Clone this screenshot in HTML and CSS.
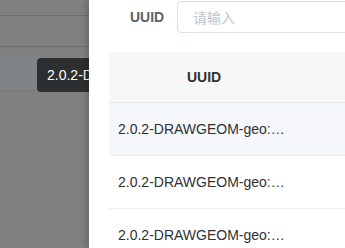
FILE: index.html
```html
<!DOCTYPE html>
<html lang="zh">
<head>
<meta charset="utf-8">
<link rel="stylesheet" href="styles.css">
</head>
<body>
<div class="page">
  <div class="backdrop">
    <div class="bg-row r1"></div>
    <div class="bg-row r2"></div>
    <div class="bg-row r3"></div>
    <div class="bg-row hl"></div>
    <div class="tooltip">2.0.2-DRAWGEOM</div>
  </div>
  <div class="drawer">
    <div class="form-row">
      <label class="form-label">UUID</label>
      <div class="input"><span class="placeholder">请输入</span></div>
    </div>
    <div class="table">
      <div class="thead"><div class="th">UUID</div></div>
      <div class="tr striped"><div class="td">2.0.2-DRAWGEOM-geo:…</div></div>
      <div class="tr"><div class="td">2.0.2-DRAWGEOM-geo:…</div></div>
      <div class="tr"><div class="td">2.0.2-DRAWGEOM-geo:…</div></div>
    </div>
  </div>
</div>
</body>
</html>
```
FILE: styles.css
```css
html, body {
  margin: 0;
  padding: 0;
  width: 345px;
  height: 248px;
  overflow: hidden;
  font-family: "Liberation Sans", Arial, sans-serif;
}
.page {
  display: flex;
  width: 345px;
  height: 248px;
  position: relative;
}
.backdrop {
  width: 89px;
  flex: none;
  background: #808080;
  position: relative;
  display: flex;
  flex-direction: column;
  overflow: hidden;
}
.bg-row { border-bottom: 1px solid #6f6f6f; }
.r1 { height: 15px; }
.r2 { height: 30px; }
.r3 { height: 10px; border-bottom: none; }
.hl { height: 33px; background: #7f8489; border-bottom: 1px solid #7a7a7a; }
.tooltip {
  position: absolute;
  left: 37px;
  top: 58px;
  height: 34px;
  padding: 0 10px;
  background: #2d2e30;
  color: #fff;
  font-size: 14px;
  line-height: 34px;
  border-radius: 4px;
  white-space: nowrap;
  z-index: 1;
}
.drawer {
  flex: 1;
  background: #fff;
  position: relative;
  z-index: 2;
  box-shadow: -3px 0 6px rgba(0,0,0,0.18);
  padding-left: 20px;
  overflow: hidden;
}
.form-row {
  display: flex;
  align-items: center;
  height: 32px;
  margin-top: 1px;
  padding-left: 21px;
}
.form-label {
  font-size: 14px;
  font-weight: bold;
  color: #606266;
  width: 47px;
  flex: none;
}
.input {
  flex: none;
  width: 200px;
  height: 30px;
  border: 1px solid #dcdfe6;
  border-radius: 4px;
  display: flex;
  align-items: center;
  padding-left: 15px;
  box-sizing: content-box;
}
.placeholder {
  font-family: "Noto Sans CJK SC", sans-serif;
  font-size: 14px;
  color: #c0c4cc;
}
.table {
  margin-top: 19px;
}
.thead {
  height: 50px;
  background: #f7f7f7;
  border-bottom: 1px solid #e4e7ed;
  display: flex;
  align-items: center;
}
.th {
  padding-left: 78px;
  font-size: 14px;
  font-weight: bold;
  color: #303133;
}
.tr {
  height: 52px;
  border-bottom: 1px solid #ebeef5;
  display: flex;
  align-items: center;
}
.tr.striped { background: #f5f7fa; }
.td {
  padding-left: 9px;
  font-size: 14px;
  color: #303133;
  white-space: nowrap;
}
```
